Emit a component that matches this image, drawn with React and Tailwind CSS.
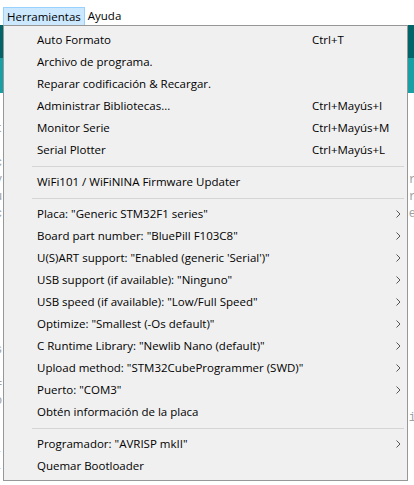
import React from 'react'

const items = [
  { label: 'Auto Formato', shortcut: 'Ctrl+T' },
  { label: 'Archivo de programa.' },
  { label: 'Reparar codificación & Recargar.' },
  { label: 'Administrar Bibliotecas...', shortcut: 'Ctrl+Mayús+I' },
  { label: 'Monitor Serie', shortcut: 'Ctrl+Mayús+M' },
  { label: 'Serial Plotter', shortcut: 'Ctrl+Mayús+L' },
  'sep',
  { label: 'WiFi101 / WiFiNINA Firmware Updater' },
  'sep',
  { label: 'Placa: "Generic STM32F1 series"', sub: true },
  { label: 'Board part number: "BluePill F103C8"', sub: true },
  { label: 'U(S)ART support: "Enabled (generic \'Serial\')"', sub: true },
  { label: 'USB support (if available): "Ninguno"', sub: true },
  { label: 'USB speed (if available): "Low/Full Speed"', sub: true },
  { label: 'Optimize: "Smallest (-Os default)"', sub: true },
  { label: 'C Runtime Library: "Newlib Nano (default)"', sub: true },
  { label: 'Upload method: "STM32CubeProgrammer (SWD)"', sub: true },
  { label: 'Puerto: "COM3"', sub: true },
  { label: 'Obtén información de la placa' },
  'sep',
  { label: 'Programador: "AVRISP mkII"', sub: true },
  { label: 'Quemar Bootloader' },
]

// code fragments peeking out on either side of the menu
const codeRows = [
  ['', ''], ['t', ''], ['', ''], ['c', ''], ['y', 'r'], ['u', 'r'], ['c', 'e'],
  ['', ''], ['', ''], ['', ''], ['', ''], ['', ''], ['', ''], ['', ''], ['s', ''],
  ['', ''], ['=', ''], ['o', ''], ['', 'i'], ['', ''], ['-', ''], ['-', ''],
]

function Chevron() {
  return (
    <svg width="5" height="8" viewBox="0 0 5 8" className="block">
      <path d="M0.5 0.5 L4 4 L0.5 7.5" fill="none" stroke="#555" strokeWidth="1" />
    </svg>
  )
}

export default function App() {
  return (
    <div
      className="relative w-[414px] h-[485px] overflow-hidden bg-white text-black"
      style={{ fontFamily: '"Segoe UI", "Open Sans", "Noto Sans", sans-serif' }}
    >
      {/* menu bar */}
      <div className="h-[25px] flex items-end pl-[3px] text-[11.5px]">
        <div className="h-[18px] px-[3px] flex items-center bg-[#cce8ff] border border-b-0 border-[#99d1ff]">
          Herramientas
        </div>
        <div className="h-[18px] px-[3px] flex items-center">Ayuda</div>
      </div>

      {/* editor behind */}
      <div className="w-full h-[33px] bg-[#006468]" />
      <div className="w-full h-[35px] bg-[#17a1a5]" />
      <div className="pt-[10px] flex flex-col text-[12px] text-[#a0a0a0]" style={{ fontFamily: '"Liberation Mono", monospace' }}>
        {codeRows.map(([l, r], i) => (
          <div key={i} className="h-[17px] flex items-center justify-between">
            <span className="-ml-[5px]">{l}</span>
            <span className="-mr-[2px]">{r}</span>
          </div>
        ))}
      </div>

      {/* dropdown */}
      <div className="absolute left-[3px] top-[25px] w-[405px] bg-[#f0f0f0] border border-[#979797] pt-[3px] pb-[3px] text-[11.5px]">
        {items.map((it, i) =>
          it === 'sep' ? (
            <div key={i} className="h-[10px] flex items-center pl-[28px] pr-[3px]">
              <div className="flex-1 border-t border-[#d5d5d5]" />
            </div>
          ) : (
            <div key={i} className="h-[22px] flex items-center">
              <div className="w-[308px] pl-[33px] whitespace-nowrap">{it.label}</div>
              <div className="flex-1 whitespace-nowrap">{it.shortcut}</div>
              <div className="w-[11px] flex items-center">{it.sub && <Chevron />}</div>
            </div>
          )
        )}
      </div>
    </div>
  )
}
